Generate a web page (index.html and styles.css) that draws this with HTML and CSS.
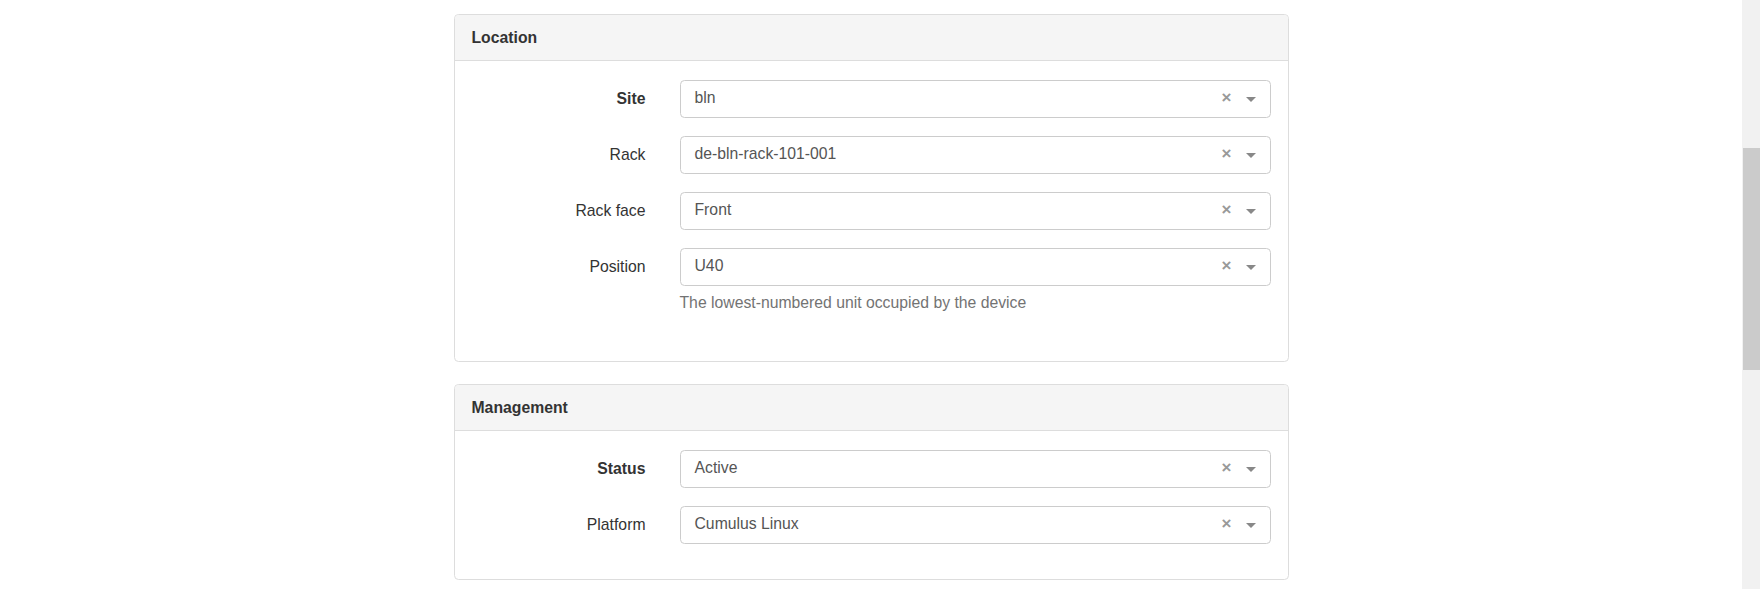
FILE: index.html
```html
<!DOCTYPE html>
<html lang="en">
<head>
    <meta charset="UTF-8">
    <title>Device - Location</title>
    <link rel="stylesheet" href="styles.css">
</head>
<body>
    <div class="page">
        <div class="content">
            <div class="panel">
                <div class="panel-heading"><strong>Location</strong></div>
                <div class="panel-body">
                    <div class="form-group">
                        <label class="required">Site</label>
                        <div class="field">
                            <div class="select">
                                <span class="value">bln</span>
                                <span class="clear">×</span>
                                <span class="arrow"><b></b></span>
                            </div>
                        </div>
                    </div>
                    <div class="form-group">
                        <label>Rack</label>
                        <div class="field">
                            <div class="select">
                                <span class="value">de-bln-rack-101-001</span>
                                <span class="clear">×</span>
                                <span class="arrow"><b></b></span>
                            </div>
                        </div>
                    </div>
                    <div class="form-group">
                        <label>Rack face</label>
                        <div class="field">
                            <div class="select">
                                <span class="value">Front</span>
                                <span class="clear">×</span>
                                <span class="arrow"><b></b></span>
                            </div>
                        </div>
                    </div>
                    <div class="form-group">
                        <label>Position</label>
                        <div class="field">
                            <div class="select">
                                <span class="value">U40</span>
                                <span class="clear">×</span>
                                <span class="arrow"><b></b></span>
                            </div>
                            <span class="help-block">The lowest-numbered unit occupied by the device</span>
                        </div>
                    </div>
                </div>
            </div>

            <div class="panel">
                <div class="panel-heading"><strong>Management</strong></div>
                <div class="panel-body">
                    <div class="form-group">
                        <label class="required">Status</label>
                        <div class="field">
                            <div class="select">
                                <span class="value">Active</span>
                                <span class="clear">×</span>
                                <span class="arrow"><b></b></span>
                            </div>
                        </div>
                    </div>
                    <div class="form-group">
                        <label>Platform</label>
                        <div class="field">
                            <div class="select">
                                <span class="value">Cumulus Linux</span>
                                <span class="clear">×</span>
                                <span class="arrow"><b></b></span>
                            </div>
                        </div>
                    </div>
                </div>
            </div>
        </div>
        <div class="scrollbar"><div class="thumb"></div></div>
    </div>
</body>
</html>
```

FILE: styles.css
```css
html, body {
    margin: 0;
    height: 589px;
    overflow: hidden;
}
body {
    font-family: "Liberation Sans", Arial, Helvetica, sans-serif;
    font-size: 15.75px;
    line-height: 22.5px;
    color: #333;
    background: #fff;
}
.page {
    display: flex;
    height: 589px;
}
.content {
    flex: 1;
    display: flex;
    flex-direction: column;
    align-items: center;
    padding-top: 14px;
}
.panel {
    width: 835px;
    box-sizing: border-box;
    border: 1px solid #ddd;
    border-radius: 4.5px;
    margin-bottom: 22.5px;
    background: #fff;
    flex-shrink: 0;
}
.panel-heading {
    background: #f5f5f5;
    border-bottom: 1px solid #ddd;
    border-radius: 4px 4px 0 0;
    padding: 12px 17px 10px 17px;
    height: 22.5px;
}
.panel-body {
    padding: 19px 17px 17px 17px;
}
.form-group {
    display: grid;
    grid-template-columns: 174px 1fr;
    column-gap: 34px;
    margin-bottom: 18px;
}
label {
    text-align: right;
    line-height: 38px;
}
label.required {
    font-weight: bold;
}
.select {
    display: flex;
    align-items: center;
    height: 38px;
    box-sizing: border-box;
    border: 1px solid #ccc;
    border-radius: 4.5px;
    padding-left: 14px;
    color: #555;
}
.value {
    flex: 1;
}
.clear {
    color: #999;
    font-weight: bold;
    font-size: 17px;
    margin-top: -1px;
}
.arrow {
    width: 38px;
    display: flex;
    justify-content: center;
    align-items: center;
}
.arrow b {
    width: 0;
    height: 0;
    border-top: 5px solid #888;
    border-left: 5px solid transparent;
    border-right: 5px solid transparent;
    margin-top: 1px;
}
.help-block {
    display: block;
    margin-top: 6.5px;
    margin-bottom: 11px;
    color: #737373;
}
.scrollbar {
    width: 18px;
    background: #f1f1f1;
    flex-shrink: 0;
    padding-top: 148px;
    box-sizing: border-box;
}
.thumb {
    height: 222px;
    margin-left: 1px;
    background: #cbcbcb;
}
```
